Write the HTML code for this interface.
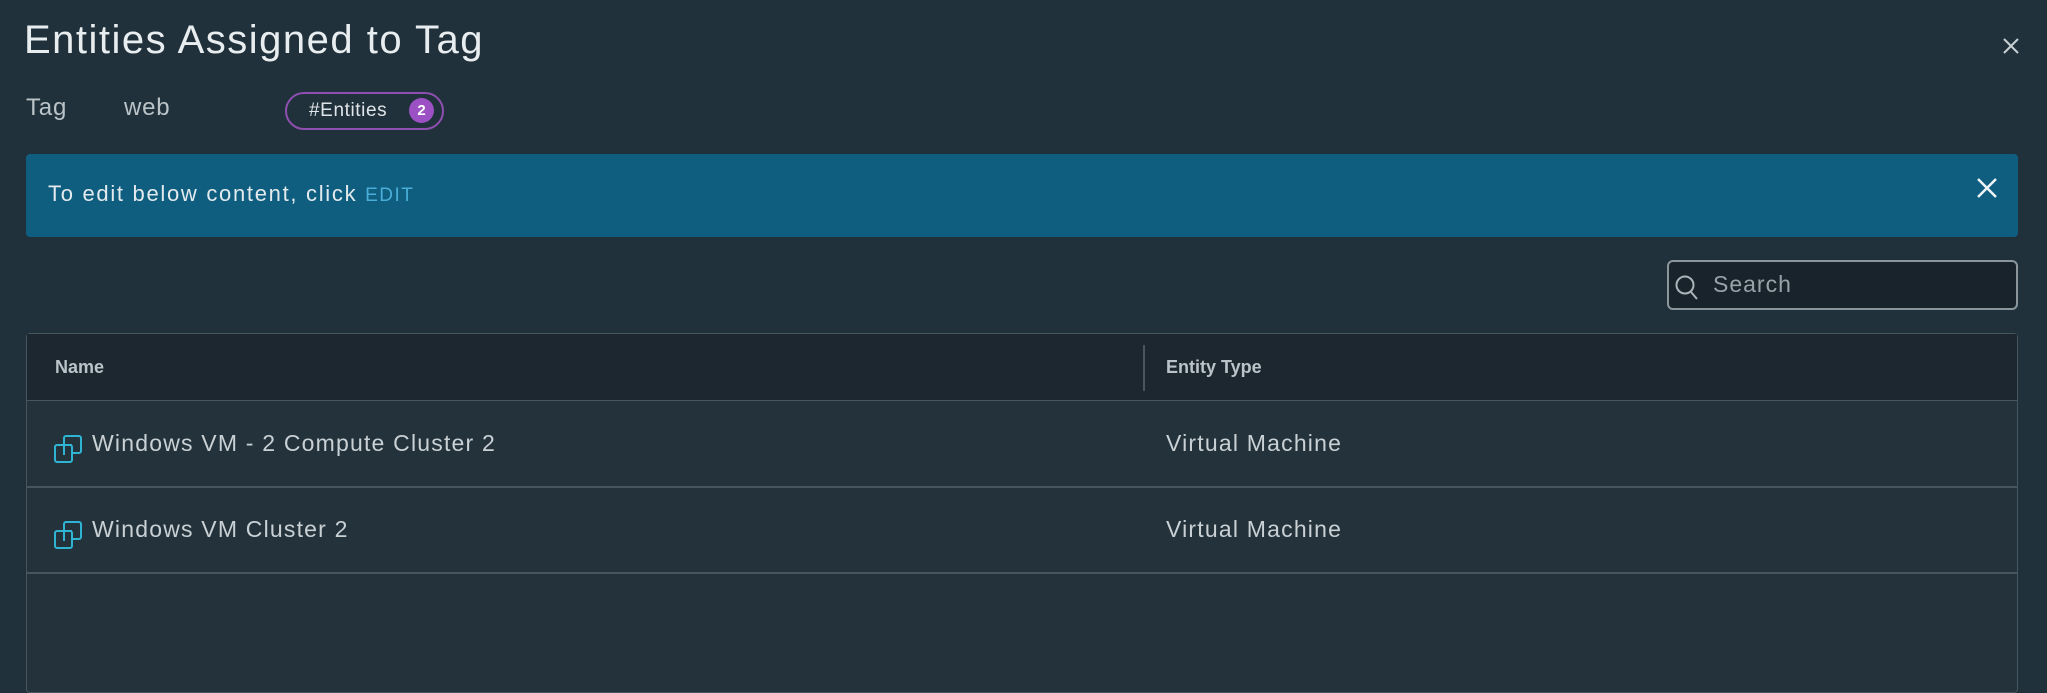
<!DOCTYPE html>
<html><head><style>
body{margin:0;width:2047px;height:684px;background:#21313b;font-family:"Liberation Sans",sans-serif;color:#dfe5e8;position:relative;overflow:hidden}
.a{position:absolute}
.r{font-size:23px;color:#c9d1d5;letter-spacing:1.2px}
</style></head><body>
<div class="a" style="left:24px;top:18px;font-size:40px;color:#e8edf0;letter-spacing:1.5px">Entities Assigned to Tag</div>
<svg class="a" style="left:2002px;top:37px" width="18" height="18"><path d="M2 2L16 16M16 2L2 16" stroke="#c8d0d4" stroke-width="2"/></svg>
<div class="a" style="left:26px;top:94px;font-size:24px;color:#b9c3c8;letter-spacing:0.8px">Tag</div>
<div class="a" style="left:124px;top:94px;font-size:24px;color:#b9c3c8;letter-spacing:0.8px">web</div>
<div class="a" style="left:285px;top:92px;width:159px;height:38px;border:2px solid #8e4fb0;border-radius:20px;box-sizing:border-box"></div>
<div class="a" style="left:309px;top:100px;font-size:19px;color:#dfe5e8;letter-spacing:0.6px">#Entities</div>
<div class="a" style="left:409px;top:98px;width:25px;height:25px;border-radius:50%;background:#9b50c4;color:#fff;font-size:15px;font-weight:bold;text-align:center;line-height:25px">2</div>
<div class="a" style="left:26px;top:154px;width:1992px;height:83px;background:#0f5e80;border-radius:4px"></div>
<div class="a" style="left:48px;top:181px;font-size:22px;color:#e3eaee;letter-spacing:1.7px">To edit below content, click <span style="color:#49aed8;font-size:19px;letter-spacing:1.5px">EDIT</span></div>
<svg class="a" style="left:1976px;top:177px" width="22" height="22"><path d="M2 2L20 20M20 2L2 20" stroke="#eef3f5" stroke-width="2.5"/></svg>
<div class="a" style="left:1667px;top:260px;width:351px;height:50px;border:2px solid #8a969c;border-radius:6px;background:#18232b;box-sizing:border-box"></div>
<svg class="a" style="left:1672px;top:272px" width="30" height="30"><circle cx="13" cy="13" r="8.5" stroke="#aab4b9" stroke-width="2" fill="none"/><path d="M19 20L25 27" stroke="#aab4b9" stroke-width="2"/></svg>
<div class="a" style="left:1713px;top:271px;font-size:23px;color:#98a3a9;letter-spacing:1px">Search</div>
<div class="a" style="left:26px;top:333px;width:1992px;height:360px;border:1.5px solid #46555e;border-radius:4px;box-sizing:border-box;background:#23323b"></div>
<div class="a" style="left:27px;top:334px;width:1990px;height:66px;background:#1c2730;border-bottom:1.5px solid #46555e"></div>
<div class="a" style="left:1143px;top:345px;width:1.5px;height:46px;background:#46555e"></div>
<div class="a" style="left:55px;top:357px;font-size:18px;font-weight:bold;color:#b9c3c8">Name</div>
<div class="a" style="left:1166px;top:357px;font-size:18px;font-weight:bold;color:#b9c3c8">Entity Type</div>
<div class="a" style="left:27px;top:486px;width:1990px;height:1.5px;background:#46555e"></div>
<div class="a" style="left:27px;top:572px;width:1990px;height:1.5px;background:#46555e"></div>
<svg class="a" style="left:53px;top:434px" width="32" height="32"><rect x="11" y="2" width="17" height="17" rx="2" fill="none" stroke="#2fb5d3" stroke-width="2"/><rect x="2" y="11" width="17" height="17" rx="2" fill="#23323b" stroke="#2fb5d3" stroke-width="2"/><path d="M11 21V11H19" stroke="#2fb5d3" stroke-width="2" fill="none"/></svg>
<svg class="a" style="left:53px;top:520px" width="32" height="32"><rect x="11" y="2" width="17" height="17" rx="2" fill="none" stroke="#2fb5d3" stroke-width="2"/><rect x="2" y="11" width="17" height="17" rx="2" fill="#23323b" stroke="#2fb5d3" stroke-width="2"/><path d="M11 21V11H19" stroke="#2fb5d3" stroke-width="2" fill="none"/></svg>
<div class="a r" style="left:92px;top:430px">Windows VM - 2 Compute Cluster 2</div>
<div class="a r" style="left:1166px;top:430px">Virtual Machine</div>
<div class="a r" style="left:92px;top:516px">Windows VM Cluster 2</div>
<div class="a r" style="left:1166px;top:516px">Virtual Machine</div>
</body></html>
